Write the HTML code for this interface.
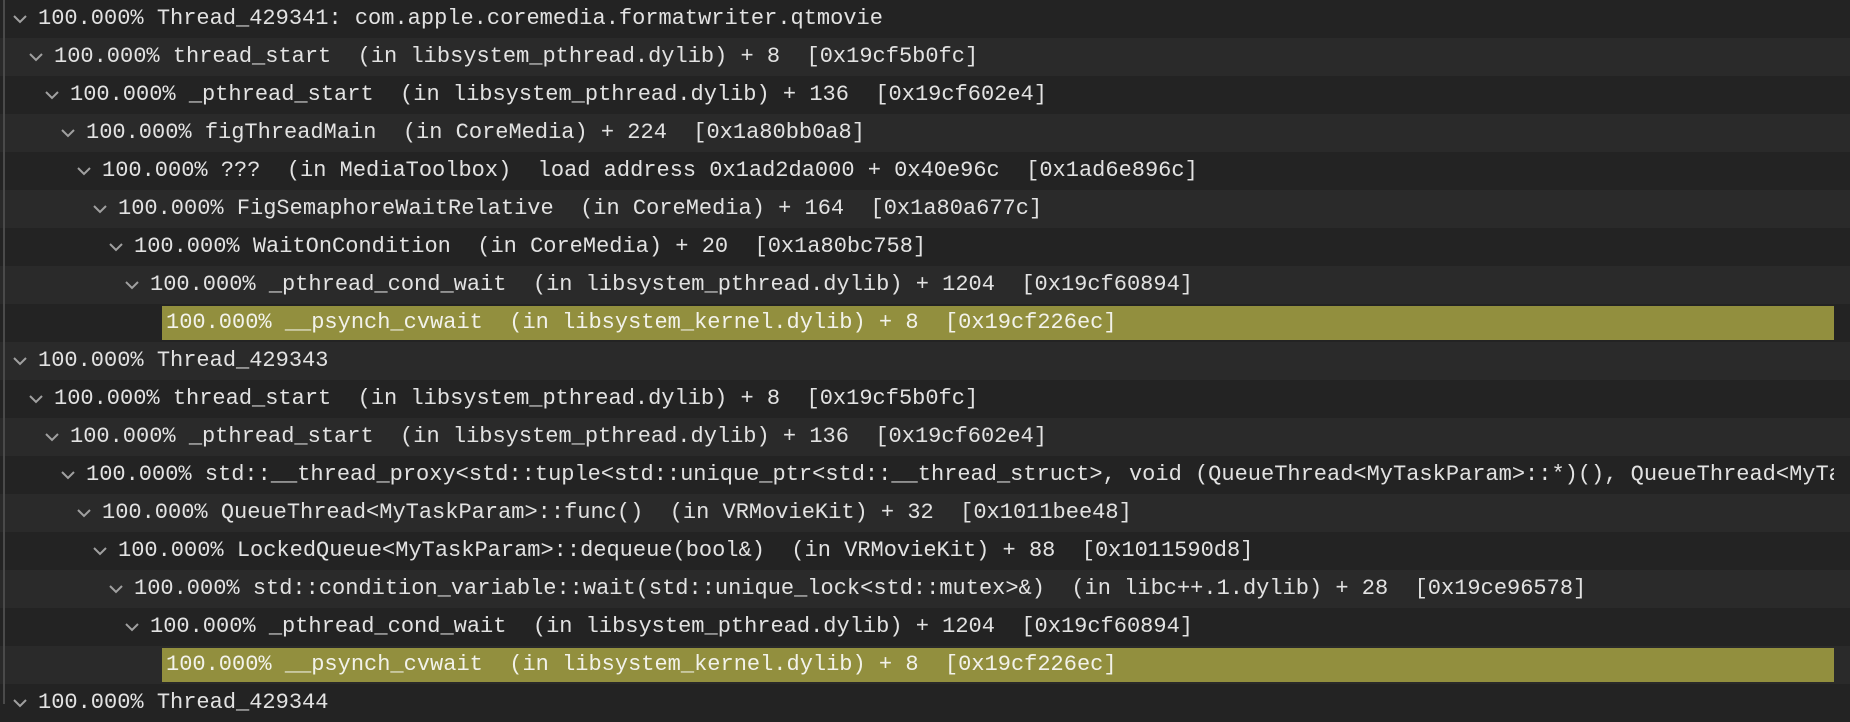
<!DOCTYPE html>
<html><head><meta charset="utf-8"><style>
html,body{margin:0;padding:0;background:#232323;width:1850px;height:704px;overflow:hidden}
.wrap{position:absolute;left:0;top:0;width:1850px;height:704px}
.row{position:absolute;left:0;width:1850px;height:38px;background:#232323}
.row.l{background:#2a2a2a}
.t{position:absolute;top:0;height:38px;line-height:38px;font-family:"Liberation Mono",monospace;font-size:22px;color:#e2e2e2;white-space:pre;overflow:hidden;max-width:1834px}
.hl{position:absolute;top:2px;height:34px;right:16px;background:#928f3e}
.hl .t{line-height:34px;color:#f2f2ea;left:4px}
svg.c{position:absolute;top:13px;width:16px;height:12px}
.bar{position:absolute;left:3px;top:0;width:2px;height:704px;background:#4a4a4a}
</style></head><body><div class="wrap">
<div class="row" style="top:0"><svg class="c" style="left:12px" viewBox="0 0 16 12"><path d="M2 3 L8 9 L14 3" fill="none" stroke="#a0a0a0" stroke-width="2"/></svg><div class="t" style="left:38px">100.000% Thread_429341: com.apple.coremedia.formatwriter.qtmovie</div></div>
<div class="row l" style="top:38px"><svg class="c" style="left:28px" viewBox="0 0 16 12"><path d="M2 3 L8 9 L14 3" fill="none" stroke="#a0a0a0" stroke-width="2"/></svg><div class="t" style="left:54px">100.000% thread_start  (in libsystem_pthread.dylib) + 8  [0x19cf5b0fc]</div></div>
<div class="row" style="top:76px"><svg class="c" style="left:44px" viewBox="0 0 16 12"><path d="M2 3 L8 9 L14 3" fill="none" stroke="#a0a0a0" stroke-width="2"/></svg><div class="t" style="left:70px">100.000% _pthread_start  (in libsystem_pthread.dylib) + 136  [0x19cf602e4]</div></div>
<div class="row l" style="top:114px"><svg class="c" style="left:60px" viewBox="0 0 16 12"><path d="M2 3 L8 9 L14 3" fill="none" stroke="#a0a0a0" stroke-width="2"/></svg><div class="t" style="left:86px">100.000% figThreadMain  (in CoreMedia) + 224  [0x1a80bb0a8]</div></div>
<div class="row" style="top:152px"><svg class="c" style="left:76px" viewBox="0 0 16 12"><path d="M2 3 L8 9 L14 3" fill="none" stroke="#a0a0a0" stroke-width="2"/></svg><div class="t" style="left:102px">100.000% ???  (in MediaToolbox)  load address 0x1ad2da000 + 0x40e96c  [0x1ad6e896c]</div></div>
<div class="row l" style="top:190px"><svg class="c" style="left:92px" viewBox="0 0 16 12"><path d="M2 3 L8 9 L14 3" fill="none" stroke="#a0a0a0" stroke-width="2"/></svg><div class="t" style="left:118px">100.000% FigSemaphoreWaitRelative  (in CoreMedia) + 164  [0x1a80a677c]</div></div>
<div class="row" style="top:228px"><svg class="c" style="left:108px" viewBox="0 0 16 12"><path d="M2 3 L8 9 L14 3" fill="none" stroke="#a0a0a0" stroke-width="2"/></svg><div class="t" style="left:134px">100.000% WaitOnCondition  (in CoreMedia) + 20  [0x1a80bc758]</div></div>
<div class="row l" style="top:266px"><svg class="c" style="left:124px" viewBox="0 0 16 12"><path d="M2 3 L8 9 L14 3" fill="none" stroke="#a0a0a0" stroke-width="2"/></svg><div class="t" style="left:150px">100.000% _pthread_cond_wait  (in libsystem_pthread.dylib) + 1204  [0x19cf60894]</div></div>
<div class="row" style="top:304px"><div class="hl" style="left:162px"><div class="t">100.000% __psynch_cvwait  (in libsystem_kernel.dylib) + 8  [0x19cf226ec]</div></div></div>
<div class="row l" style="top:342px"><svg class="c" style="left:12px" viewBox="0 0 16 12"><path d="M2 3 L8 9 L14 3" fill="none" stroke="#a0a0a0" stroke-width="2"/></svg><div class="t" style="left:38px">100.000% Thread_429343</div></div>
<div class="row" style="top:380px"><svg class="c" style="left:28px" viewBox="0 0 16 12"><path d="M2 3 L8 9 L14 3" fill="none" stroke="#a0a0a0" stroke-width="2"/></svg><div class="t" style="left:54px">100.000% thread_start  (in libsystem_pthread.dylib) + 8  [0x19cf5b0fc]</div></div>
<div class="row l" style="top:418px"><svg class="c" style="left:44px" viewBox="0 0 16 12"><path d="M2 3 L8 9 L14 3" fill="none" stroke="#a0a0a0" stroke-width="2"/></svg><div class="t" style="left:70px">100.000% _pthread_start  (in libsystem_pthread.dylib) + 136  [0x19cf602e4]</div></div>
<div class="row" style="top:456px"><svg class="c" style="left:60px" viewBox="0 0 16 12"><path d="M2 3 L8 9 L14 3" fill="none" stroke="#a0a0a0" stroke-width="2"/></svg><div class="t" style="left:86px;width:1748px">100.000% std::__thread_proxy&lt;std::tuple&lt;std::unique_ptr&lt;std::__thread_struct&gt;, void (QueueThread&lt;MyTaskParam&gt;::*)(), QueueThread&lt;MyTaskParam&gt;*&gt;&gt;(void*)</div></div>
<div class="row l" style="top:494px"><svg class="c" style="left:76px" viewBox="0 0 16 12"><path d="M2 3 L8 9 L14 3" fill="none" stroke="#a0a0a0" stroke-width="2"/></svg><div class="t" style="left:102px">100.000% QueueThread&lt;MyTaskParam&gt;::func()  (in VRMovieKit) + 32  [0x1011bee48]</div></div>
<div class="row" style="top:532px"><svg class="c" style="left:92px" viewBox="0 0 16 12"><path d="M2 3 L8 9 L14 3" fill="none" stroke="#a0a0a0" stroke-width="2"/></svg><div class="t" style="left:118px">100.000% LockedQueue&lt;MyTaskParam&gt;::dequeue(bool&amp;)  (in VRMovieKit) + 88  [0x1011590d8]</div></div>
<div class="row l" style="top:570px"><svg class="c" style="left:108px" viewBox="0 0 16 12"><path d="M2 3 L8 9 L14 3" fill="none" stroke="#a0a0a0" stroke-width="2"/></svg><div class="t" style="left:134px">100.000% std::condition_variable::wait(std::unique_lock&lt;std::mutex&gt;&amp;)  (in libc++.1.dylib) + 28  [0x19ce96578]</div></div>
<div class="row" style="top:608px"><svg class="c" style="left:124px" viewBox="0 0 16 12"><path d="M2 3 L8 9 L14 3" fill="none" stroke="#a0a0a0" stroke-width="2"/></svg><div class="t" style="left:150px">100.000% _pthread_cond_wait  (in libsystem_pthread.dylib) + 1204  [0x19cf60894]</div></div>
<div class="row l" style="top:646px"><div class="hl" style="left:162px"><div class="t">100.000% __psynch_cvwait  (in libsystem_kernel.dylib) + 8  [0x19cf226ec]</div></div></div>
<div class="row" style="top:684px"><svg class="c" style="left:12px" viewBox="0 0 16 12"><path d="M2 3 L8 9 L14 3" fill="none" stroke="#a0a0a0" stroke-width="2"/></svg><div class="t" style="left:38px">100.000% Thread_429344</div></div>
<div class="bar"></div>
</div></body></html>
